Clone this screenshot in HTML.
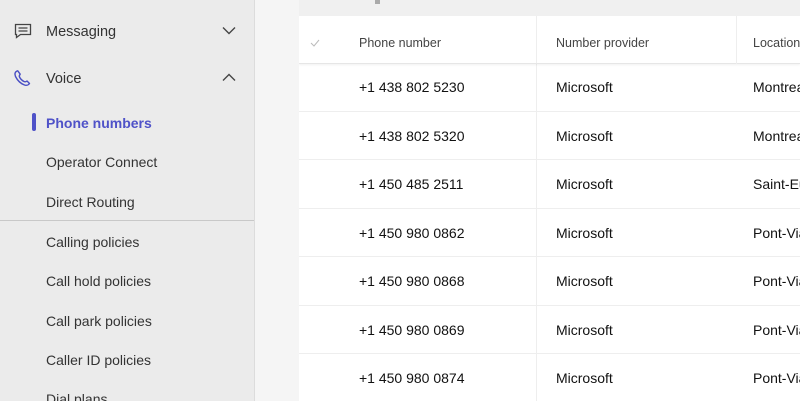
<!DOCTYPE html>
<html><head><style>
*{margin:0;padding:0;box-sizing:border-box}
html,body{width:800px;height:401px;overflow:hidden}
body{background:#f5f5f5;font-family:"Liberation Sans",sans-serif;position:relative}
.side{position:absolute;left:0;top:0;width:255px;height:401px;background:#ebebeb;border-right:1px solid #dcdcdc}
.it{position:absolute;left:46px;font-size:14px;color:#333;line-height:18px;white-space:nowrap}
.tbl{position:absolute;left:299px;top:16px;width:501px;height:385px;background:#fff;overflow:hidden}
.top{position:absolute;left:299px;top:0;width:501px;height:16px;background:#f0f0f0}
.h{position:absolute;top:0;height:48px;width:100%;border-bottom:1px solid #e6e6e6;box-shadow:0 1px 2px rgba(0,0,0,.06)}
.c{position:absolute;font-size:14px;color:#111;line-height:18px;white-space:nowrap}
.hc{position:absolute;font-size:12.5px;color:#444;top:20px;white-space:nowrap}
.row{position:absolute;left:0;width:501px;height:48.5px;border-bottom:1px solid #eee}
</style></head><body>
<div class="side">
<svg style="position:absolute;left:14px;top:23px" width="18" height="16" viewBox="0 0 18 16"><path d="M1.5 1.5h15v10h-10l-4 3v-3h-1z" fill="none" stroke="#444" stroke-width="1.3"/><path d="M4.5 5h9M4.5 8h9" stroke="#444" stroke-width="1.2"/></svg>
<div class="it" style="top:23px;font-size:14.5px">Messaging</div>
<svg style="position:absolute;left:222px;top:26px" width="14" height="9"><path d="M1 1.5l6 6 6-6" fill="none" stroke="#444" stroke-width="1.4"/></svg>
<svg style="position:absolute;left:13px;top:69px" width="20" height="18" viewBox="0 0 20 18"><path d="M4 2c-2 1-2.5 3-1.5 5.5 2 4 5 7 9 8.5 2 .7 4 0 5-1.5l-2.5-2.5c-1 .8-2 1-3 .5-2-1-3.5-2.5-4.5-4.5-.5-1 0-2 .7-2.8L4.7 1.8z" fill="none" stroke="#4a4fc4" stroke-width="1.4" stroke-linejoin="round"/></svg>
<div class="it" style="top:70px;font-size:14.5px">Voice</div>
<svg style="position:absolute;left:222px;top:73px" width="14" height="9"><path d="M1 7.5l6-6 6 6" fill="none" stroke="#444" stroke-width="1.4"/></svg>
<div style="position:absolute;left:32px;top:113px;width:4px;height:18px;border-radius:2px;background:#4f52c8"></div>
<div class="it" style="top:114px;color:#4f52c8;font-weight:bold">Phone numbers</div>
<div class="it" style="top:153px">Operator Connect</div>
<div class="it" style="top:193px">Direct Routing</div>
<div style="position:absolute;left:0;top:220px;width:254px;height:1px;background:#c8c8c8"></div>
<div class="it" style="top:233px">Calling policies</div>
<div class="it" style="top:272px">Call hold policies</div>
<div class="it" style="top:312px">Call park policies</div>
<div class="it" style="top:351px">Caller ID policies</div>
<div class="it" style="top:390px">Dial plans</div>
</div>
<div class="top"><div style="position:absolute;left:76px;top:0;width:5px;height:4px;background:#aaa"></div></div>
<div class="tbl">
<div style="position:absolute;left:237px;top:0;width:1px;height:385px;background:#eee"></div>
<div class="h">
<svg style="position:absolute;left:11px;top:23px" width="10" height="8"><path d="M1 4l3 3 5-6" fill="none" stroke="#bbb" stroke-width="1"/></svg>
<div class="hc" style="left:60px">Phone number</div>
<div class="hc" style="left:257px">Number provider</div>
<div style="position:absolute;left:437px;top:0;width:1px;height:48px;background:#eee"></div>
<div class="hc" style="left:454px">Location</div>
</div>
<div class="row" style="top:47px"><div class="c" style="left:60px;top:15px">+1 438 802 5230</div><div class="c" style="left:257px;top:15px">Microsoft</div><div class="c" style="left:454px;top:15px">Montreal</div></div>
<div class="row" style="top:95.5px"><div class="c" style="left:60px;top:15px">+1 438 802 5320</div><div class="c" style="left:257px;top:15px">Microsoft</div><div class="c" style="left:454px;top:15px">Montreal</div></div>
<div class="row" style="top:144px"><div class="c" style="left:60px;top:15px">+1 450 485 2511</div><div class="c" style="left:257px;top:15px">Microsoft</div><div class="c" style="left:454px;top:15px">Saint-Eustache</div></div>
<div class="row" style="top:192.5px"><div class="c" style="left:60px;top:15px">+1 450 980 0862</div><div class="c" style="left:257px;top:15px">Microsoft</div><div class="c" style="left:454px;top:15px">Pont-Viau</div></div>
<div class="row" style="top:241px"><div class="c" style="left:60px;top:15px">+1 450 980 0868</div><div class="c" style="left:257px;top:15px">Microsoft</div><div class="c" style="left:454px;top:15px">Pont-Viau</div></div>
<div class="row" style="top:289.5px"><div class="c" style="left:60px;top:15px">+1 450 980 0869</div><div class="c" style="left:257px;top:15px">Microsoft</div><div class="c" style="left:454px;top:15px">Pont-Viau</div></div>
<div class="row" style="top:338px"><div class="c" style="left:60px;top:15px">+1 450 980 0874</div><div class="c" style="left:257px;top:15px">Microsoft</div><div class="c" style="left:454px;top:15px">Pont-Viau</div></div>
</div>
</body></html>
